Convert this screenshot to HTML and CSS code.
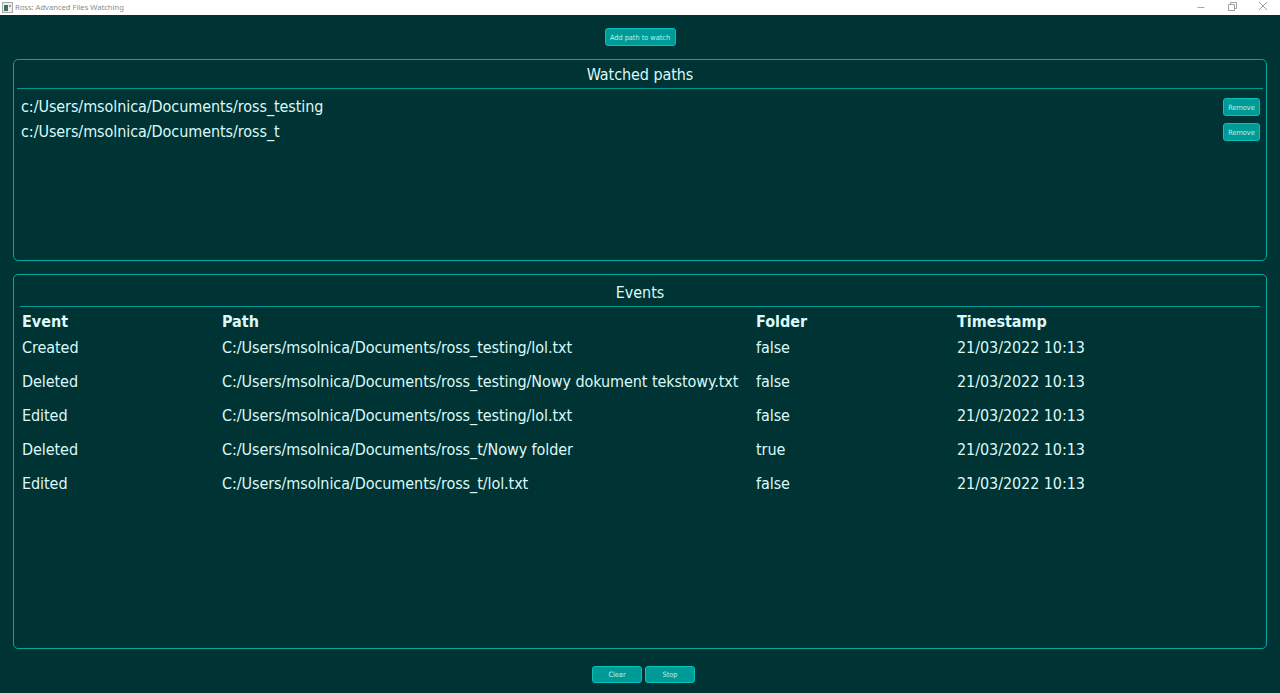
FILE: index.html
```html
<!DOCTYPE html>
<html lang="en">
<head>
<meta charset="utf-8">
<title>Ross: Advanced Files Watching</title>
<link rel="stylesheet" href="styles.css">
</head>
<body>
<header class="titlebar">
  <div class="title-left">
    <svg class="app-icon" width="11" height="11" viewBox="0 0 11 11"><rect x="0.5" y="0.5" width="10" height="10" fill="#eef0f0" stroke="#a8a8a8"/><rect x="2" y="3" width="4" height="6" fill="#3f6f6a"/><rect x="7" y="3" width="2" height="2" fill="#9a9a9a"/></svg>
    <span class="title-text">Ross: Advanced Files Watching</span>
  </div>
  <div class="window-controls">
    <svg class="wc" width="10" height="10" viewBox="0 0 10 10"><path d="M1.5 6.5H8.5" stroke="#a8a8a8" fill="none"/></svg>
    <svg class="wc" width="10" height="10" viewBox="0 0 10 10"><path d="M1.5 3.5H7.5V9.5H1.5ZM3.5 3.5V1.5H9.5V7.5H7.5" stroke="#a0a0a0" fill="none"/></svg>
    <svg class="wc" width="10" height="10" viewBox="0 0 10 10"><path d="M1 1L9 9M9 1L1 9" stroke="#a0a0a0" fill="none"/></svg>
  </div>
</header>
<main class="app">
  <div class="top-actions"><button class="btn btn-add">Add path to watch</button></div>
  <section class="panel panel-paths">
    <h2 class="panel-title">Watched paths</h2>
    <ul class="path-list">
      <li class="path-row"><span>c:/Users/msolnica/Documents/ross_testing</span><button class="btn btn-remove">Remove</button></li>
      <li class="path-row"><span>c:/Users/msolnica/Documents/ross_t</span><button class="btn btn-remove">Remove</button></li>
    </ul>
  </section>
  <section class="panel panel-events">
    <h2 class="panel-title panel-title-events">Events</h2>
    <div class="events">
      <div class="ev-row ev-head"><span>Event</span><span>Path</span><span>Folder</span><span>Timestamp</span></div>
      <div class="ev-row"><span>Created</span><span>C:/Users/msolnica/Documents/ross_testing/lol.txt</span><span>false</span><span>21/03/2022 10:13</span></div>
      <div class="ev-row"><span>Deleted</span><span>C:/Users/msolnica/Documents/ross_testing/Nowy dokument tekstowy.txt</span><span>false</span><span>21/03/2022 10:13</span></div>
      <div class="ev-row"><span>Edited</span><span>C:/Users/msolnica/Documents/ross_testing/lol.txt</span><span>false</span><span>21/03/2022 10:13</span></div>
      <div class="ev-row"><span>Deleted</span><span>C:/Users/msolnica/Documents/ross_t/Nowy folder</span><span>true</span><span>21/03/2022 10:13</span></div>
      <div class="ev-row"><span>Edited</span><span>C:/Users/msolnica/Documents/ross_t/lol.txt</span><span>false</span><span>21/03/2022 10:13</span></div>
    </div>
  </section>
  <div class="bottom-actions"><button class="btn btn-bottom">Clear</button><button class="btn btn-bottom">Stop</button></div>
</main>
</body>
</html>
```
FILE: styles.css
```css
* { box-sizing: border-box; }
html, body { margin: 0; height: 100%; overflow: hidden; }
body {
  display: flex;
  flex-direction: column;
  height: 693px;
  background: #003333;
  color: #dcfafa;
  font-family: "DejaVu Sans Condensed", "DejaVu Sans", sans-serif;
  font-stretch: condensed;
  letter-spacing: -0.07px;
}
.titlebar {
  height: 15px;
  flex: none;
  background: #fff;
  display: flex;
  justify-content: space-between;
  align-items: center;
  padding: 0 0 0 2px;
}
.title-left { display: flex; align-items: center; gap: 2px; }
.app-icon { display: block; }
.title-text { font-family: "Noto Sans", sans-serif; font-size: 7.6px; color: #8c8c8c; line-height: 15px; letter-spacing: 0; }
.window-controls { display: flex; gap: 21px; padding-right: 12px; }
.wc { display: block; margin-top: -3px; }
.app { flex: 1; display: flex; flex-direction: column; padding: 13px 13px 10px; min-height: 0; }
.top-actions, .bottom-actions { display: flex; justify-content: center; flex: none; }
.top-actions { margin-bottom: 13px; }
.bottom-actions { gap: 3px; margin-top: 17px; padding-left: 7px; }
.btn {
  font-family: "DejaVu Sans Condensed", "DejaVu Sans", sans-serif;
  font-stretch: condensed;
  font-size: 7.3px;
  letter-spacing: 0;
  color: #b8f2f0;
  background: #009a96;
  border: 1px solid #00c4bd;
  border-radius: 3px;
  padding: 0;
  height: 18px;
  line-height: 17px;
  display: block;
}
.btn-add { width: 71px; }
.btn-remove { width: 37px; }
.btn-bottom { width: 50px; height: 17px; line-height: 16px; }
.panel {
  border: 1px solid #00a8a2;
  border-radius: 5px;
  padding: 0 3px 0 3px;
  display: flex;
  flex-direction: column;
}
.panel-paths { height: 202px; margin-bottom: 13px; flex: none; }
.panel-events { flex: 1; min-height: 0; padding: 0 6px 0 6px; }
.panel-title {
  margin: 0;
  height: 29px;
  border-bottom: 1px solid #009a96;
  font-size: 16px;
  font-weight: 400;
  line-height: 29px;
  text-align: center;
  flex: none;
}
.panel-title-events { height: 32px; line-height: 35px; }
.path-list { list-style: none; margin: 0; padding: 5px 3px 0 4px; }
.path-row {
  display: flex;
  justify-content: space-between;
  align-items: center;
  height: 25px;
  font-size: 16px;
  line-height: 29px;
  white-space: nowrap;
}
.events { padding: 1px 0 0 2px; }
.ev-row {
  display: grid;
  grid-template-columns: 200px 534px 201px 1fr;
  height: 34px;
  font-size: 16px;
  line-height: 34px;
  white-space: nowrap;
}
.ev-head { line-height: 27px; font-weight: 700; height: 23px; letter-spacing: -0.02px; }
```
